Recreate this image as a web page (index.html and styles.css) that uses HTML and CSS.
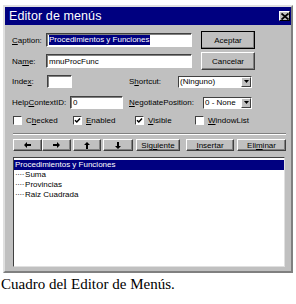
FILE: index.html
```html
<!DOCTYPE html>
<html lang="es">
<head>
<meta charset="utf-8">
<link rel="stylesheet" href="styles.css">
</head>
<body>
<div class="dialog">
  <div class="titlebar">
    <span class="title">Editor de menús</span>
    <span class="close"><svg width="8" height="7" viewBox="0 0 8 7"><path d="M0.5 0.5 L7.5 6.5 M7.5 0.5 L0.5 6.5" stroke="#000" stroke-width="1.8"/></svg></span>
  </div>
  <div class="body">
    <div class="row r1">
      <span class="lbl w-cap"><u>C</u>aption:</span>
      <span class="field f-long"><span class="sel">Procedimientos y Funciones</span></span>
      <span class="btn b-dlg default">Aceptar</span>
    </div>
    <div class="row r2">
      <span class="lbl w-cap">Na<u>m</u>e:</span>
      <span class="field f-long">mnuProcFunc</span>
      <span class="btn b-dlg">Cancelar</span>
    </div>
    <div class="row r3">
      <span class="lbl w-idx">Inde<u>x</u>:</span>
      <span class="field f-idx"></span>
      <span class="lbl w-sc">S<u>h</u>ortcut:</span>
      <span class="combo c-sc"><span class="cval">(Ninguno)</span><span class="cbtn"><svg width="5" height="3" viewBox="0 0 5 3"><path d="M0 0H5L2.5 3Z" fill="#000"/></svg></span></span>
    </div>
    <div class="row r4">
      <span class="lbl w-help">Help<u>C</u>ontextID:</span>
      <span class="field f-help">0</span>
      <span class="lbl w-neg"><u>N</u>egotiatePosition:</span>
      <span class="combo c-neg"><span class="cval">0 - None</span><span class="cbtn"><svg width="5" height="3" viewBox="0 0 5 3"><path d="M0 0H5L2.5 3Z" fill="#000"/></svg></span></span>
    </div>
    <div class="row r5">
      <span class="chk k1"><span class="box"></span>C<u>h</u>ecked</span>
      <span class="chk k2"><span class="box"><svg width="7" height="7" viewBox="0 0 7 7"><path d="M1 3.2 L2.8 5 L6 1.6" stroke="#000" stroke-width="1.5" fill="none"/></svg></span><u>E</u>nabled</span>
      <span class="chk k3"><span class="box"><svg width="7" height="7" viewBox="0 0 7 7"><path d="M1 3.2 L2.8 5 L6 1.6" stroke="#000" stroke-width="1.5" fill="none"/></svg></span><u>V</u>isible</span>
      <span class="chk k4"><span class="box"></span><u>W</u>indowList</span>
    </div>
    <div class="sep"></div>
    <div class="row r6">
      <span class="btn a-left"><svg width="7" height="6" viewBox="0 0 7 6"><path d="M0 3 L3 0 V2 H7 V4 H3 V6 Z" fill="#000"/></svg></span>
      <span class="btn a-right"><svg width="7" height="6" viewBox="0 0 7 6"><path d="M7 3 L4 0 V2 H0 V4 H4 V6 Z" fill="#000"/></svg></span>
      <span class="btn a-up"><svg width="6" height="7" viewBox="0 0 6 7"><path d="M3 0 L6 3 H4 V7 H2 V3 H0 Z" fill="#000"/></svg></span>
      <span class="btn a-down"><svg width="6" height="7" viewBox="0 0 6 7"><path d="M3 7 L6 4 H4 V0 H2 V4 H0 Z" fill="#000"/></svg></span>
      <span class="btn b-sig">Sig<u>u</u>iente</span>
      <span class="btn b-ins"><u>I</u>nsertar</span>
      <span class="btn b-eli">Eli<u>m</u>inar</span>
    </div>
    <div class="list">
      <div class="item on">Procedimientos y Funciones</div>
      <div class="item"><span class="dots">····</span>Suma</div>
      <div class="item"><span class="dots">····</span>Provincias</div>
      <div class="item"><span class="dots">····</span>Raiz Cuadrada</div>
    </div>
  </div>
</div>
<p class="caption">Cuadro del Editor de Menús.</p>
</body>
</html>
```
FILE: styles.css
```css
html, body {
  margin: 0;
  padding: 0;
  background: #fff;
}
body {
  width: 296px;
  height: 304px;
  overflow: hidden;
}
.dialog {
  box-sizing: border-box;
  width: 290px;
  height: 268px;
  margin: 5px 0 0 3px;
  background: #c0c0c0;
  border: 2px solid;
  border-color: #e0e0e0 #808080 #808080 #e0e0e0;
  font-family: "Liberation Sans", Arial, sans-serif;
  font-size: 8px;
  color: #000;
}
.titlebar {
  height: 18px;
  background: #000080;
  display: flex;
  align-items: center;
  justify-content: space-between;
  padding: 0 1px 0 4px;
}
.title {
  color: #fff;
  font-size: 12.5px;
  letter-spacing: 0.1px;
}
.close {
  box-sizing: border-box;
  width: 11px;
  height: 10px;
  background: #c0c0c0;
  border: 1px solid;
  border-color: #fff #000 #000 #fff;
  display: flex;
  align-items: center;
  justify-content: center;
}
.body {
  padding: 6px 0 4px 7px;
}
.row {
  display: flex;
  align-items: center;
}
.r1 { height: 18px; }
.r2 { height: 18px; margin-top: 3px; }
.r3 { height: 13px; margin-top: 5px; }
.r4 { height: 13px; margin-top: 8px; }
.r5 { height: 9px; margin-top: 7px; }
.r6 { height: 12px; margin-top: 4px; }
.lbl { white-space: nowrap; }
.w-cap { width: 34px; }
.w-idx { width: 35px; }
.w-sc { width: 49px; margin-left: 57px; }
.w-help { width: 58px; }
.w-neg { width: 74px; margin-left: 6px; }
.field {
  box-sizing: border-box;
  background: #fff;
  border: 1px solid;
  border-color: #404040 #fff #fff #404040;
  box-shadow: inset 1px 1px 0 #808080;
  display: flex;
  align-items: center;
  padding-left: 2px;
  white-space: nowrap;
  overflow: hidden;
}
.f-long { width: 146px; height: 14px; }
.f-idx { width: 25px; height: 13px; }
.f-help { width: 53px; height: 13px; }
.sel {
  background: #000080;
  color: #fff;
  line-height: 10px;
}
.btn {
  box-sizing: border-box;
  background: #c0c0c0;
  border: 1px solid;
  border-color: #fff #404040 #404040 #fff;
  box-shadow: inset -1px -1px 0 #808080;
  display: flex;
  align-items: center;
  justify-content: center;
  white-space: nowrap;
}
.b-dlg { width: 54px; height: 18px; margin-left: 9px; }
.default { outline: 1px solid #000; outline-offset: -1px; border-color: #fff #000 #000 #fff; }
.combo {
  box-sizing: border-box;
  height: 12px;
  background: #fff;
  border: 1px solid;
  border-color: #404040 #fff #fff #404040;
  display: flex;
  align-items: stretch;
}
.c-sc { width: 74px; }
.c-neg { width: 49px; }
.cval {
  flex: 1;
  display: flex;
  align-items: center;
  padding-left: 1px;
  white-space: nowrap;
  overflow: hidden;
}
.cbtn {
  box-sizing: border-box;
  width: 10px;
  background: #c0c0c0;
  border: 1px solid;
  border-color: #fff #404040 #404040 #fff;
  display: flex;
  align-items: center;
  justify-content: center;
}
.chk {
  display: flex;
  align-items: center;
  white-space: nowrap;
}
.k1 { width: 60px; margin-left: 1px; }
.k2 { width: 62px; }
.k3 { width: 60px; }
.box {
  box-sizing: border-box;
  width: 9px;
  height: 9px;
  background: #fff;
  border: 1px solid;
  border-color: #404040 #fff #fff #404040;
  margin-right: 4px;
  display: flex;
  align-items: center;
  justify-content: center;
}
.sep {
  width: 273px;
  height: 0;
  margin: 8px 0 0 1px;
  border-top: 1px solid #808080;
  border-bottom: 1px solid #fff;
}
.a-left { width: 29px; height: 12px; margin-left: 1px; }
.a-right { width: 29px; height: 12px; }
.a-up { width: 28px; height: 12px; margin-left: 2px; }
.a-down { width: 30px; height: 12px; margin-left: 2px; }
.b-sig { width: 44px; height: 12px; margin-left: 3px; }
.b-ins { width: 48px; height: 12px; margin-left: 6px; }
.b-eli { width: 49px; height: 12px; margin-left: 3px; }
.list {
  box-sizing: border-box;
  width: 272px;
  height: 110px;
  margin: 6px 0 0 1px;
  background: #fff;
  border: 1px solid;
  border-color: #404040 #e0e0e0 #e0e0e0 #404040;
  padding-top: 2px;
}
.item {
  height: 10px;
  line-height: 10px;
  padding-left: 1px;
  white-space: nowrap;
}
.item.on {
  background: #000080;
  color: #fff;
}
.dots {
  letter-spacing: -0.4px;
  margin-right: 1px;
}
.caption {
  margin: 3px 0 0 1px;
  font-family: "Liberation Serif", "Times New Roman", serif;
  font-size: 15px;
  line-height: 17px;
  color: #000;
}
```
